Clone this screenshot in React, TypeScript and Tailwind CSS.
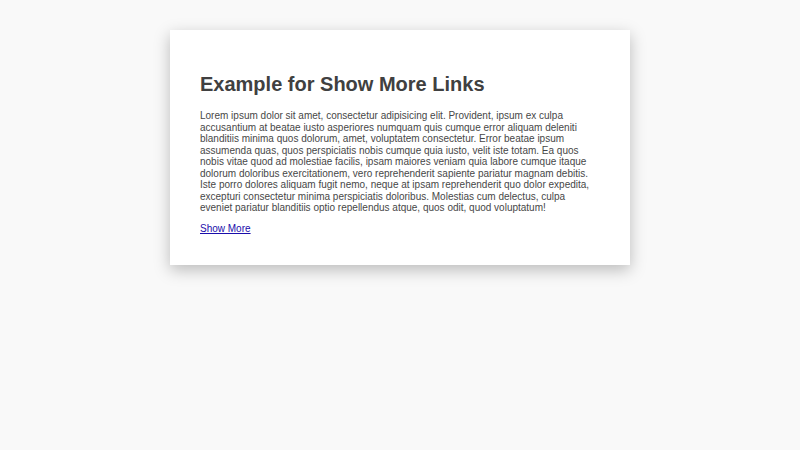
export default function App() {
  return (
    <div
      className="min-h-[450px] w-full bg-[#f9f9f9] pt-[30px]"
      style={{ fontFamily: '"Liberation Sans", Arial, sans-serif' }}
    >
      <div className="mx-auto w-[460px] bg-white px-[30px] pt-[30px] pb-[31px] shadow-[0_5px_15px_rgba(0,0,0,0.25)]">
        <h1 className="mt-[13px] mb-[14px] text-[20px] font-bold leading-[23px] text-[#404040]">
          Example for Show More Links
        </h1>
        <p className="text-[10px] leading-[11.5px] text-[#474747]">
          Lorem ipsum dolor sit amet, consectetur adipisicing elit. Provident, ipsum ex culpa
          accusantium at beatae iusto asperiores numquam quis cumque error aliquam deleniti
          blanditiis minima quos dolorum, amet, voluptatem consectetur. Error beatae ipsum
          assumenda quas, quos perspiciatis nobis cumque quia iusto, velit iste totam. Ea quos
          nobis vitae quod ad molestiae facilis, ipsam maiores veniam quia labore cumque itaque
          dolorum doloribus exercitationem, vero reprehenderit sapiente pariatur magnam debitis.
          Iste porro dolores aliquam fugit nemo, neque at ipsam reprehenderit quo dolor expedita,
          excepturi consectetur minima perspiciatis doloribus. Molestias cum delectus, culpa
          eveniet pariatur blanditiis optio repellendus atque, quos odit, quod voluptatum!
        </p>
        <a
          href="#"
          className="mt-[9px] block w-fit text-[10px] leading-[11.5px] text-[#1a0dab] underline"
        >
          Show More
        </a>
      </div>
    </div>
  );
}
